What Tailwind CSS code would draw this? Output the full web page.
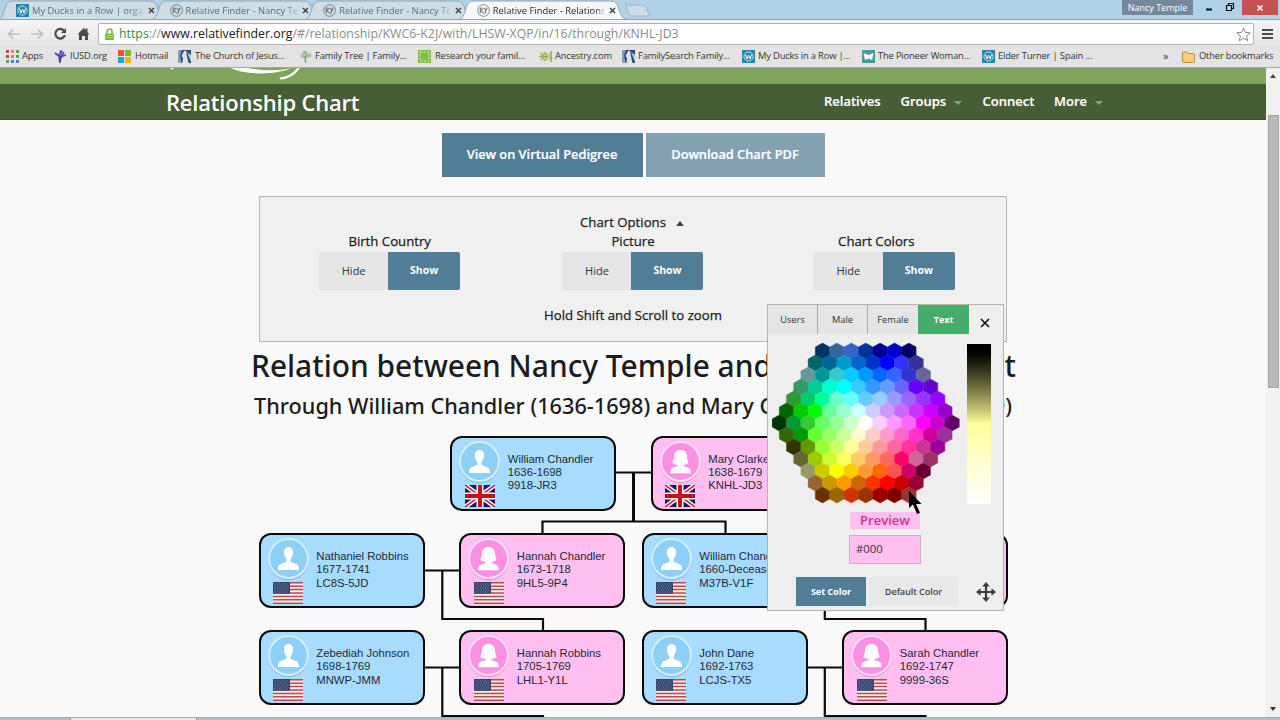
<!DOCTYPE html>
<html lang="en">
<head>
    <meta charset="UTF-8">
    <meta name="viewport" content="width=device-width, initial-scale=1.0">
    <title>Relative Finder - Relationship Chart</title>
    <script src="https://cdn.jsdelivr.net/npm/@tailwindcss/browser@4"></script>
</head>
<body class="w-[1280px] h-[720px] overflow-hidden bg-[#f9f9f9] font-['Open_Sans',sans-serif] text-[#1c1c1c]">

    <!-- Shared symbols -->
    <svg class="hidden">
        <symbol id="wp" viewBox="0 0 13 13">
            <rect width="13" height="13" fill="#2585ad"/>
            <circle cx="6.5" cy="6.5" r="4.6" fill="none" stroke="#d5e9f1" stroke-width=".9"/>
            <path d="M3.500 4.600l1.500 4.500 1.500-4 1.500 4 1.500-4.500" fill="none" stroke="#fff" stroke-width="1"/>
        </symbol>
        <symbol id="rf" viewBox="0 0 14 14">
            <circle cx="7" cy="7" r="6.300" fill="none" stroke="#666" stroke-width=".8"/>
            <path d="M3.500 10V4.500c2.500-1 3.500.8.8 2.700L7.500 10M7 5c1.500-1 2.500 0 2 2.500M11.500 4c-1.700 1.500-2.500 4-3 6.500" fill="none" stroke="#444" stroke-width=".9"/>
        </symbol>
        <symbol id="church" viewBox="0 0 13 13">
            <rect width="13" height="13" fill="#274a78"/>
            <path d="M0 0h4L2 6l2 7H0z" fill="#7e9dbb"/>
            <path d="M6 1c2-1 3 1 2.500 3l2 9H4.500L5 8 3.500 6z" fill="#dde5ea"/>
            <path d="M9 2l4 3v7z" fill="#b9c9d6"/>
        </symbol>
        <symbol id="man" viewBox="0 0 24 26">
            <path d="M12 1c3.200 0 4.800 2.300 4.800 5.400 0 1-.2 1.600-.5 2 .5.600 0 2-.7 2.500-.3 1.500-.8 2.300-1.400 3v2.400c2.800 1.700 6.700 2.200 7.800 4.200.9 1.500 1 3.500 1 4.500H1c0-1 .1-3 1-4.500 1.100-2 5-2.500 7.800-4.200v-2.400c-.6-.7-1.100-1.500-1.400-3-.7-.5-1.200-1.900-.7-2.500-.3-.4-.5-1-.5-2C7.200 3.300 8.800 1 12 1z" fill="#fff"/>
        </symbol>
        <symbol id="woman" viewBox="0 0 24 26">
            <path d="M12 1c4 0 6.500 2.600 6.700 5.600.1 3 .5 5.200 1.800 7.200-1 2-3 2.600-5.500 2.800v1c2 1 6 1.400 7 3.600.6 1.300.6 3 .6 4H1.400c0-1 0-2.700.6-4 1-2.200 5-2.600 7-3.600v-1c-2.500-.2-4.500-.8-5.500-2.800 1.300-2 1.700-4.200 1.800-7.200C5.500 3.600 8 1 12 1z" fill="#fff"/>
        </symbol>
        <symbol id="uk" viewBox="0 0 30 22">
            <rect width="30" height="22" fill="#15196c"/>
            <path d="M0 0l30 22M30 0L0 22" stroke="#fff" stroke-width="4.500"/>
            <path d="M0 0l30 22M30 0L0 22" stroke="#cf142b" stroke-width="1.500"/>
            <path d="M15 0v22M0 11h30" stroke="#fff" stroke-width="7"/>
            <path d="M15 0v22M0 11h30" stroke="#c8101c" stroke-width="4"/>
        </symbol>
        <symbol id="us" viewBox="0 0 30 22">
            <rect width="30" height="22" fill="#f6eeee"/>
            <path d="M0 .85h30M0 4.230h30M0 7.620h30M0 11h30M0 14.400h30M0 17.770h30M0 21.150h30" stroke="#bd4850" stroke-width="1.500"/>
            <rect width="17" height="11.800" fill="#35476e"/>
            <path d="M1 2h15M2 4h14M1 6h15M2 8h14M1 10h15" stroke="#8c99b3" stroke-width=".8" stroke-dasharray="1 1.500"/>
        </symbol>
    </svg>

    <!-- Tab strip -->
    <div class="relative flex h-[19px] bg-[#b1d1e6]">
        <div class="flex pl-[5px]" id="tabs"></div>
        <svg class="w-[28px] h-[19px] ml-[5px] mt-[1px]" viewBox="0 0 28 19"><path d="M3 4h16q2 0 3 2l3 7q0 2-2 2H8q-2 0-3-2L2 6q-1-2 1-2z" fill="#c9dbe6" stroke="#9fb6c6"/></svg>
        <div class="ml-auto flex items-start text-white">
            <div class="w-[71px] h-[15px] bg-[#76899a] text-[9px] leading-[15px] text-center mr-[12px]">Nancy Temple</div>
            <svg class="w-[37px] h-[15px]" viewBox="0 0 37 15" fill="none" stroke="#111"><path d="M1 9.500h6" stroke-width="2"/><path d="M21.500 5.500h5v5h-5zM23.500 5V3.500h5v5H27" stroke-width="1.200"/></svg>
            <div class="w-[36px] h-[15px] bg-[#c75050] flex items-center justify-center mr-[2px]">
                <svg class="size-[8px]" viewBox="0 0 8 8"><path d="M1.500 1.500l5 5M6.500 1.500l-5 5" stroke="#fff" stroke-width="1.600"/></svg>
            </div>
        </div>
    </div>

    <!-- Address bar -->
    <div class="h-[27px] flex items-center bg-linear-to-b from-[#f4f4f4] to-[#e6e6e6] border-t border-[#8fa5b5]">
        <svg class="w-[98px] h-[26px]" viewBox="0 0 98 26" fill="none">
            <path d="M20 14H8.500M13 9.500L8.500 14l4.500 4.500M31 14h11.500M38 9.500l4.500 4.500-4.500 4.500" stroke="#bfbfbf" stroke-width="1.700"/>
            <path d="M64 10.800a4.800 4.800 0 1 0 .8 4.200" stroke="#4a4a4a" stroke-width="2.200"/>
            <path d="M66 8v5h-5z" fill="#4a4a4a"/>
            <path d="M77.500 14.500L83.500 8l2 2V8.500h2v3.700l2 2.300h-1.500V20H85v-4h-3v4h-3v-5.500z" fill="#4a4a4a"/>
        </svg>
        <div class="w-[1156px] h-[22px] mt-[2px] bg-white border border-[#b4b0ac] rounded-[2px] flex items-center">
            <svg class="w-[11px] h-[13px] ml-[5px] mr-[4px]" viewBox="0 0 11 13"><path d="M3 6V3.500a2.500 2.500 0 0 1 5 0V6" fill="none" stroke="#8aa56e" stroke-width="1.500"/><rect x="1" y="5.500" width="9" height="6.500" rx="1" fill="#74b944"/><path d="M1.500 7.500h8M1.500 9.500h8" stroke="#a8d884"/></svg>
            <div class="text-[12.350px] leading-none text-[#8b8b8b] whitespace-nowrap"><span class="text-[#3a8a3c]">https</span>://<span class="text-[#222]">www.relativefinder.org</span>/#/relationship/KWC6-K2J/with/LHSW-XQP/in/16/through/KNHL-JD3</div>
            <svg class="size-[15px] ml-auto mr-[2px]" viewBox="0 0 15 15"><path d="M7.500 1l1.900 4.400 4.800.4-3.600 3.200 1.100 4.700-4.200-2.500-4.200 2.500 1.100-4.700L.8 5.800l4.800-.4z" fill="#fff" stroke="#777" stroke-width=".9"/></svg>
        </div>
        <svg class="w-[11px] h-[12px] ml-[8px] mt-[2px]" viewBox="0 0 11 12"><path d="M0 2h11M0 6h11M0 10h11" stroke="#4a4a4a" stroke-width="2.200"/></svg>
    </div>

    <!-- Bookmarks bar -->
    <div id="bookmarks" class="flex h-[22px] items-center whitespace-nowrap bg-[#e3e3e3] border-b border-[#a5a5a5] text-[9.400px] tracking-[-0.180px] text-[#333]"></div>

    <!-- Page -->
    <div class="flex h-[649px]">
        <div class="relative w-[1266px] overflow-hidden">
            <div class="h-[16px] bg-[#7fa45c]">
                <svg class="w-[320px] h-[16px]" viewBox="0 0 320 16"><path d="M230 0C246 7 274 7.500 292 0C280 3 262 3 248 0z" fill="#fff"/><path d="M280 10.500q12-1 19-11" fill="none" stroke="#fff" stroke-width="2.200"/><circle cx="172" cy="0" r="1.500" fill="#fff"/></svg>
            </div>
            <div class="h-[36px] bg-[#465d35] border-b border-[#3a4e2c] flex items-center text-white pl-[166px]">
                <h1 class="w-[658px] text-[22px] font-semibold leading-none tracking-[-0.2px]">Relationship Chart</h1>
                <nav class="flex items-center text-[13px] font-semibold leading-none [-webkit-text-stroke:0.2px_white]">
                    <span class="w-[76.500px]">Relatives</span>
                    <span class="w-[53px]">Groups</span>
                    <span class="mt-[2px] mr-[21px] border-x-4 border-t-4 border-transparent border-t-[#8ba174]"></span>
                    <span class="w-[71.500px]">Connect</span>
                    <span class="w-[41px]">More</span>
                    <span class="mt-[2px] border-x-4 border-t-4 border-transparent border-t-[#8ba174]"></span>
                </nav>
            </div>

            <div class="flex justify-center gap-[3px] pt-[13px] text-white text-[12.800px] font-semibold [-webkit-text-stroke:0.2px_white]">
                <button class="w-[201px] h-[44px] bg-[#527d96]">View on Virtual Pedigree</button>
                <button class="w-[179px] h-[44px] bg-[#84a1b3]">Download Chart PDF</button>
            </div>

            <section class="w-[748px] h-[146px] mt-[19px] ml-[259px] border border-[#b5b5b5] bg-[#f0f0f0] px-[8px] pt-[16px] text-[13.200px] text-center [-webkit-text-stroke:0.25px]">
                <div class="h-[19px] leading-[19px] flex items-center justify-center pr-[2px]">Chart Options<span class="ml-[10px] mt-[2px] border-x-4 border-b-[5px] border-transparent border-b-[#444]"></span></div>
                <div id="options" class="grid grid-cols-3 leading-[19px]"></div>
                <div class="mt-[17px] leading-[19px]">Hold Shift and Scroll to zoom</div>
            </section>

            <div class="flex justify-between w-[765px] ml-[251px] mt-[4px] h-[40px] items-center font-['Noto_Sans','Open_Sans',sans-serif] text-[29.900px] font-medium whitespace-nowrap"><span>Relation between Nancy Temple and</span><span>t</span></div>
            <div class="flex justify-between w-[758px] ml-[254px] h-[40px] items-center font-['Noto_Sans','Open_Sans',sans-serif] text-[21.700px] font-medium whitespace-nowrap"><span>Through William Chandler (1636-1698) and Mary C</span><span>9)</span></div>

            <!-- Relationship chart -->
            <div id="chart" class="absolute left-0 top-0 w-[1266px] h-[649px]">
                <svg class="absolute inset-0 w-[1266px] h-[649px]" viewBox="0 68 1266 649" fill="none" stroke="#0a0a0a" stroke-width="2.200">
                    <path d="M616 472.500h35M542.500 534v-12.500h183V534"/>
                    <path d="M633.500 472v49" stroke-width="3"/>
                    <path d="M424 570.500h36M442.300 570v49h100.700v12M807 570.500h36M824.800 570v49h100.700v12"/>
                    <path d="M424 667.500h36M442.300 667v49h100.700v3M807 667.500h36M824.800 667v49h100.700v3"/>
                </svg>
            </div>

            <!-- Colour picker -->
            <div class="absolute left-[767px] top-[236px] w-[237px] h-[307px] bg-[#eee] border border-[#b3b3b3]">
                <div class="flex h-[29px] text-[9.300px] text-[#333] leading-[29px] text-center">
                    <div class="w-[50px] bg-[#e5e5e5] border-r border-[#aaa]">Users</div>
                    <div class="w-[50px] bg-[#e5e5e5] border-r border-[#aaa]">Male</div>
                    <div class="w-[50px] bg-[#e5e5e5]">Female</div>
                    <div class="w-[51px] bg-[#47ab6c] text-white font-bold text-[9px]">Text</div>
                    <svg class="size-[10px] ml-[11px] mt-[13px]" viewBox="0 0 10 10"><path d="M1 1l8 8M9 1L1 9" stroke="#111" stroke-width="1.700"/></svg>
                </div>
                <div class="flex pl-[4px] pt-[9px]">
                    <svg id="hexes" class="w-[188px] h-[161px]" viewBox="0 0 188 161"></svg>
                    <div class="w-[24px] h-[160px] mt-[1px] ml-[7px] bg-linear-to-b from-black via-[#ffff99] to-white"></div>
                </div>
                <div class="w-[70px] h-[17px] mt-[8px] ml-[82px] bg-[#ffbff0] text-[#d62f86] text-[13px] leading-[16px] font-semibold text-center">Preview</div>
                <div class="w-[72px] h-[29px] mt-[6px] ml-[81px] bg-[#ffbff0] border border-[#ccaec7] text-[11.300px] leading-[26px] pl-[6px] text-[#333]">#000</div>
                <div class="flex items-center mt-[13px] ml-[28px] text-[9.200px]">
                    <button class="w-[70px] h-[29px] bg-[#527d96] text-white font-bold tracking-[-0.1px]">Set Color</button>
                    <button class="w-[89px] h-[29px] ml-[3px] bg-[#e8e8e8] text-[#444] font-semibold tracking-[-0.1px]">Default Color</button>
                    <svg class="size-[20px] ml-[18px] mt-[1px]" viewBox="0 0 20 20"><path d="M10 2v16M2 10h16" stroke="#3d3d3d" stroke-width="2.200"/><path d="M10 0l3.800 4.500H6.200zM10 20l3.800-4.500H6.200zM0 10l4.500-3.800v7.600zM20 10l-4.500-3.800v7.600z" fill="#3d3d3d"/></svg>
                </div>
            </div>

            <!-- Mouse pointer -->
            <svg class="absolute left-[908px] top-[422px] w-[15px] h-[26px]" viewBox="0 0 15 26"><path d="M1 1v17l4-3.500L9 24l3-1.300-4-8.700h5.500z" fill="#000"/></svg>
        </div>

        <!-- Scrollbar -->
        <div class="w-[14px] bg-[#f1f1f1] flex flex-col items-center">
            <span class="mt-[6px] border-x-3 border-b-4 border-transparent border-b-[#444]"></span>
            <div class="w-[11px] h-[273px] mt-[37px] bg-[#b9b9b9] border border-[#a3a3a3]"></div>
            <span class="mt-auto mb-[6px] border-x-3 border-t-4 border-transparent border-t-[#333]"></span>
        </div>
    </div>
    <div class="h-[3px] bg-[#b4bcc4] border-t border-[#a4adb6] pl-[70px]"><div class="w-[127px] h-[2px] bg-[#e9e9ec] border-x border-[#999]"></div></div>

    <script>
        // Browser tabs
        const tabs = [
            ['wp', 'My Ducks in a Row | orga'],
            ['rf', 'Relative Finder - Nancy Te'],
            ['rf', 'Relative Finder - Nancy Te'],
            ['rf', 'Relative Finder - Relations'],
        ];
        document.getElementById('tabs').innerHTML = tabs.map(([icon, text], i) => {
            const active = i === 3;
            return `<div class="relative w-[153.600px] h-[19px] flex items-center pt-[2px] pl-[11px]">
                <svg class="absolute left-[-6px] top-0 w-[170px] h-[19px]" viewBox="0 0 170 19"><path d="M0 19C5 18 6 4 9 2.500Q10 1 13 1H151Q155 1 157 4C160 10 160 18 166 19" fill="${active ? '#f6f7f8' : '#cfdde6'}" stroke="#8fa5b5"/></svg>
                <svg class="relative size-[13px] shrink-0"><use href="#${icon}"/></svg>
                <span class="relative ml-[3px] w-[111px] whitespace-nowrap text-[9.400px] leading-[15px] bg-clip-text text-transparent bg-linear-to-r ${active ? 'from-[#222] from-92% to-[#aaa]' : 'from-[#5a646b] from-88% to-[#b5c0c8]'}">${text}</span>
                <svg class="relative size-[7px] ml-[5px] shrink-0" viewBox="0 0 7 7"><path d="M1 1l5 5M6 1L1 6" stroke="#444" stroke-width="1.500"/></svg>
            </div>`;
        }).join('');

        // Bookmark icons, 13px each
        const icons = {
            apps: '<path d="M0 1.500h3M0 6.500h3" stroke="#c9443b" stroke-width="3"/><path d="M5 1.500h3M5 6.500h3" stroke="#dd8c34" stroke-width="3"/><path d="M10 1.500h3M10 6.500h3M0 11.500h3" stroke="#5da35a" stroke-width="3"/><path d="M5 11.500h3M10 11.500h3" stroke="#4c7fc4" stroke-width="3"/>',
            iusd: '<path d="M1 3l4 3 1 7M5 6l2-4M6 8l4-6M6 12c0-5 2-6 6-7" stroke="#5038b8" stroke-width="1.700" fill="none"/><circle cx="7" cy="1.500" r="1.300" fill="#5038b8"/>',
            ms: '<path d="M0 0h6v6H0z" fill="#f0502a"/><path d="M7 0h6v6H7z" fill="#7cb82f"/><path d="M0 7h6v6H0z" fill="#2a9fe0"/><path d="M7 7h6v6H7z" fill="#f7b500"/>',
            church: '<use href="#church"/>',
            tree: '<path d="M6.500 13V5M6.500 8L3 6M6.500 7l4-2" stroke="#8d9e7d" stroke-width="1.500"/><circle cx="6" cy="3" r="2.500" fill="#a9bd98"/><circle cx="3" cy="6" r="2" fill="#b8c7a9"/><circle cx="10" cy="5.500" r="2.300" fill="#a9bd98"/>',
            research: '<path d="M0 0h13v13H0z" fill="#7cc142"/><path d="M2 2h9v9H2z" fill="none" stroke="#dff2cf" stroke-dasharray="2 1.500"/>',
            ancestry: '<path d="M0 6.500h9M2 3l3 3.500L2 10M5 2l3 4.500L5 11" stroke="#8fae3c" stroke-width="1.300" fill="none"/><circle cx="7" cy="6.500" r="3.500" fill="none" stroke="#a7bf5a"/><path d="M12 1v11" stroke="#8fae3c" stroke-width="1.500"/>',
            wp: '<use href="#wp"/>',
            pioneer: '<path d="M0 0h13v13H0z" fill="#3f9d9b"/><path d="M1.500 3l5 2 5-2-1.500 7-3.500-1.500L3 10z" fill="#fff"/>',
        };
        // icon left, icon, text left, text
        const bookmarks = [
            [6, 'apps', 22, 'Apps'], [54, 'iusd', 70, 'IUSD.org'], [118, 'ms', 135, 'Hotmail'],
            [178, 'church', 195, 'The Church of Jesus...'], [299, 'tree', 315, 'Family Tree | Family...'],
            [418, 'research', 435, 'Research your famil...'], [539, 'ancestry', 555, 'Ancestry.com'],
            [622, 'church', 638, 'FamilySearch Family...'], [742, 'wp', 758, 'My Ducks in a Row |...'],
            [862, 'pioneer', 878, 'The Pioneer Woman...'], [982, 'wp', 998, 'Elder Turner | Spain ...'],
        ];
        document.getElementById('bookmarks').innerHTML = bookmarks.map(([x, icon, tx, text], i) => {
            const next = i < bookmarks.length - 1 ? bookmarks[i + 1][0] : 1163;
            return `<div class="flex items-center shrink-0 first:ml-[6px]" style="width:${next - x}px">
                <svg class="w-[13px] h-[13px] shrink-0" viewBox="0 0 13 13">${icons[icon]}</svg>
                <span style="margin-left:${tx - x - 13}px">${text}</span></div>`;
        }).join('') + `<span class="w-[13px] shrink-0 text-[11px]">»</span>
            <svg class="w-[13px] h-[12px] shrink-0 ml-[6px]" viewBox="0 0 13 12"><path d="M.5 2q0-1 1-1h3l1.500 1.500h5.500q1 0 1 1v7q0 1-1 1h-10q-1 0-1-1z" fill="#f5cf78" stroke="#b98f3c"/></svg>
            <span class="ml-[4px]">Other bookmarks</span>`;

        // Show / hide switches
        document.getElementById('options').innerHTML = ['Birth Country', 'Picture', 'Chart Colors'].map((name, i) => `
            <div>
                <div>${name}</div>
                <div class="flex justify-center text-[11px] leading-[37px] h-[38px] mt-[1px] -mb-[1px] [-webkit-text-stroke:0] ${i === 2 ? 'pl-[16px]' : ''}">
                    <div class="w-[69px] bg-[#e5e5e5] text-[#333]">Hide</div>
                    <div class="w-[72px] bg-[#527d96] text-white text-[10.500px] font-bold rounded-r-[2px]">Show</div>
                </div>
            </div>`).join('');

        // People: left, top, sex, flag, lines
        const people = [
            [450, 367.500, 'man', 'uk', ['William Chandler', '1636-1698', '9918-JR3']],
            [650.500, 367.500, 'woman', 'uk', ['Mary Clarke', '1638-1679', 'KNHL-JD3']],
            [258.500, 465, 'man', 'us', ['Nathaniel Robbins', '1677-1741', 'LC8S-5JD']],
            [459, 465, 'woman', 'us', ['Hannah Chandler', '1673-1718', '9HL5-9P4']],
            [641.500, 465, 'man', 'us', ['William Chandler', '1660-Deceased', 'M37B-V1F']],
            [842, 465, 'woman', 'us', []],
            [258.500, 562, 'man', 'us', ['Zebediah Johnson', '1698-1769', 'MNWP-JMM']],
            [459, 562, 'woman', 'us', ['Hannah Robbins', '1705-1769', 'LHL1-Y1L']],
            [641.500, 562, 'man', 'us', ['John Dane', '1692-1763', 'LCJS-TX5']],
            [842, 562, 'woman', 'us', ['Sarah Chandler', '1692-1747', '9999-36S']],
        ];
        document.getElementById('chart').insertAdjacentHTML('beforeend', people.map(([x, y, sex, flag, lines]) => `
            <div class="absolute w-[166px] h-[75px] border-2 border-[#0a0a0a] rounded-[12px] flex ${sex === 'man' ? 'bg-[#a8dcff]' : 'bg-[#ffbff0]'}" style="left:${x}px;top:${y}px">
                <div class="w-[41px] ml-[7px] pt-[3px] flex flex-col items-center">
                    <div class="size-[41px] shrink-0 rounded-full border-2 flex items-center justify-center shadow-[0_1px_1px_#0003] ${sex === 'man' ? 'bg-[#8cd0f6] border-[#d5efff]' : 'bg-[#fb90e2] border-[#ffdcf7]'}">
                        <svg class="w-[23px] h-[25px]"><use href="#${sex}"/></svg>
                    </div>
                    <svg class="w-[30px] h-[22px] mt-[3px] shrink-0"><use href="#${flag}"/></svg>
                </div>
                <div class="ml-[7.800px] pt-[15px] font-['Liberation_Sans',Arial,sans-serif] text-[11.300px] leading-[13.400px] text-[#1b2a35] whitespace-nowrap">${lines.map(l => `<div>${l}</div>`).join('')}</div>
            </div>`).join(''));

        // Colour map, one row of hexagons per string
        const rows = [
            '036 369 36c 039 009 00c 006',
            '066 069 09c 06c 03c 00f 33f 339',
            '699 099 3cc 0cf 09f 06f 36f 33c 669',
            '396 0c9 0fc 0ff 3cf 39f 69f 66f 60f 60c',
            '393 0c6 0f9 6fc 6ff 6cf 9cf 99f 96f 93f 90f',
            '060 0c0 0f0 6f9 9fc cff ccf c9f c6f c3f c0f 90c',
            '030 093 3c3 6f6 9f9 cfc fff fcf f9f f6f f0f c0c 606',
            '360 090 6f3 9f6 cf9 ffc fcc f9c f6c f3c c09 939',
            '330 690 9f3 cf6 ff9 fc9 f99 f69 f39 c39 909',
            '663 9c0 cf3 ff6 fc6 f96 f66 f06 c69 936',
            '996 cc0 ff0 fc0 f93 f60 ff5050 c06 603',
            '963 c90 f90 c60 f30 f00 c00 903',
            '630 960 c30 930 900 800000 933',
        ];
        const W = 14.400;
        document.getElementById('hexes').innerHTML = rows.map((row, r) => {
            const cells = row.split(' ');
            return cells.map((c, i) => {
                const x = 93.700 + (i - cells.length / 2) * W, y = r * 12;
                return `<path d="M${x} ${y + 4}l7.200-4 7.200 4v8l-7.200 4-7.200-4z" fill="#${c}" stroke="#${c}" stroke-width=".4"/>`;
            }).join('');
        }).join('');
    </script>
</body>
</html>
